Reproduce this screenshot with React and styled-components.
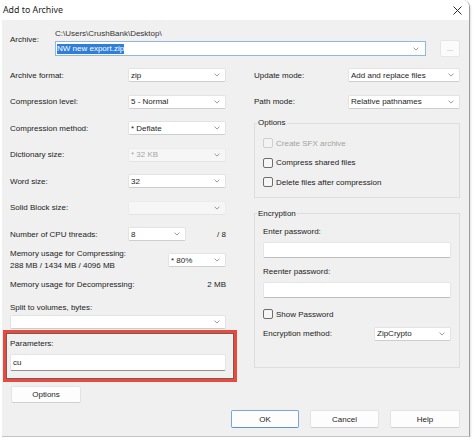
import React from "react";
import styled, { createGlobalStyle } from "styled-components";

const GlobalStyle = createGlobalStyle`
  html, body { margin: 0; padding: 0; background: #ffffff; }
  body {
    font-family: "Liberation Sans", Arial, sans-serif;
    font-size: 8px;
    color: #222222;
  }
  * { box-sizing: border-box; }
`;

const Chevron = () => (
  <svg width="6" height="4" viewBox="0 0 6 4">
    <path d="M0.5 0.6 L3 3.1 L5.5 0.6" fill="none" stroke="#8e8e8e" strokeWidth="0.9" />
  </svg>
);

const CloseIcon = () => (
  <svg width="9" height="9" viewBox="0 0 9 9">
    <path d="M0.5 0.5 L8.5 8.5 M8.5 0.5 L0.5 8.5" stroke="#2a2a2a" strokeWidth="1" fill="none" />
  </svg>
);

const Select = ({ value, width, disabled }) => (
  <SelectBox $w={width} $disabled={disabled}>
    <span>{value}</span>
    <Chevron />
  </SelectBox>
);

const Check = ({ label, disabled, mt }) => (
  <CheckRow $mt={mt} $disabled={disabled}>
    <CheckBox $disabled={disabled} />
    <span>{label}</span>
  </CheckRow>
);

const App = () => {
  return (
    <>
      <GlobalStyle />
      <Window>
        <TitleBar>
          <Title>Add to Archive</Title>
          <CloseIcon />
        </TitleBar>
        <Body>
          <ArchiveBlock>
            <ArchiveLabel>Archive:</ArchiveLabel>
            <div>
              <PathText>C:\Users\CrushBank\Desktop\</PathText>
              <ComboRow>
                <ArchiveCombo>
                  <Selected>NW new export.zip</Selected>
                  <Chevron />
                </ArchiveCombo>
                <BrowseButton>...</BrowseButton>
              </ComboRow>
            </div>
          </ArchiveBlock>

          <Columns>
            <Column>
              <Row>
                <Label>Archive format:</Label>
                <Select value="zip" width={98} />
              </Row>
              <Row $mt={12.5}>
                <Label>Compression level:</Label>
                <Select value="5 - Normal" width={98} />
              </Row>
              <Row $mt={12.5}>
                <Label>Compression method:</Label>
                <Select value="* Deflate" width={98} />
              </Row>
              <Row $mt={12.5}>
                <Label>Dictionary size:</Label>
                <Select value="* 32 KB" width={98} disabled />
              </Row>
              <Row $mt={12.5}>
                <Label>Word size:</Label>
                <Select value="32" width={98} />
              </Row>
              <Row $mt={12.5}>
                <Label>Solid Block size:</Label>
                <Select value="" width={98} disabled />
              </Row>
              <Row $mt={12.5}>
                <Label>Number of CPU threads:</Label>
                <Select value="8" width={58} />
                <Suffix>/ 8</Suffix>
              </Row>
              <Row $mt={7} $h={24}>
                <Label>
                  <Line>Memory usage for Compressing:</Line>
                  <Line>288 MB / 1434 MB / 4096 MB</Line>
                </Label>
                <Select value="* 80%" width={58} />
              </Row>
              <Row $mt={6} $h={12}>
                <Label>Memory usage for Decompressing:</Label>
                <span>2 MB</span>
              </Row>
              <Row $mt={11} $h={12}>
                <Label>Split to volumes, bytes:</Label>
              </Row>
              <Row $mt={2}>
                <Select value="" />
              </Row>
              <ParamsBox>
                <Line>Parameters:</Line>
                <ParamsInput>cu</ParamsInput>
              </ParamsBox>
              <Button $w={70}>Options</Button>
            </Column>

            <Column>
              <Row>
                <Label>Update mode:</Label>
                <Select value="Add and replace files" width={112} />
              </Row>
              <Row $mt={12.5}>
                <Label>Path mode:</Label>
                <Select value="Relative pathnames" width={112} />
              </Row>
              <Group $mt={8.5} $pb={8}>
                <Legend>Options</Legend>
                <Check label="Create SFX archive" disabled mt={7} />
                <Check label="Compress shared files" mt={5.7} />
                <Check label="Delete files after compression" mt={5.7} />
              </Group>
              <Group $mt={9.6} $pb={26}>
                <Legend>Encryption</Legend>
                <FieldCaption $mt={6}>Enter password:</FieldCaption>
                <PasswordInput />
                <FieldCaption $mt={8}>Reenter password:</FieldCaption>
                <PasswordInput />
                <Check label="Show Password" mt={9.5} />
                <Row $mt={5.5}>
                  <Label>Encryption method:</Label>
                  <Select value="ZipCrypto" width={77} />
                </Row>
              </Group>
            </Column>
          </Columns>

          <ButtonBar>
            <Button $w={68} $primary>OK</Button>
            <Button $w={69}>Cancel</Button>
            <Button $w={70}>Help</Button>
          </ButtonBar>
        </Body>
      </Window>
    </>
  );
};

export default App;

const Window = styled.div`
  width: 468px;
  height: 437px;
  margin-left: 2px;
  display: flex;
  flex-direction: column;
  border-right: 1px solid #9c9c9c;
  border-bottom: 1px solid #c4c4c4;
  border-top-right-radius: 7px;
  overflow: hidden;
  box-shadow: 1px 1px 2px rgba(0, 0, 0, 0.12);
`;

const TitleBar = styled.div`
  height: 20px;
  flex-shrink: 0;
  display: flex;
  align-items: center;
  justify-content: space-between;
  padding: 0 7px 0 1px;
  background: #ffffff;
`;

const Title = styled.span`
  font-family: "Noto Sans", "Open Sans", sans-serif;
  font-size: 8.8px;
  color: #1c1c1c;
`;

const Body = styled.div`
  flex: 1;
  background: #f0f0f0;
  padding: 8px 9px 0 8px;
`;

const ArchiveBlock = styled.div`
  display: grid;
  grid-template-columns: 45px 1fr;
`;

const ArchiveLabel = styled.div`
  padding-top: 5.5px;
  line-height: 11px;
`;

const PathText = styled.div`
  line-height: 11px;
  height: 12px;
  color: #333333;
`;

const ComboRow = styled.div`
  display: flex;
  align-items: center;
  height: 17px;
`;

const ArchiveCombo = styled.div`
  flex: 1;
  height: 15px;
  display: flex;
  align-items: center;
  justify-content: space-between;
  padding: 0 6px 0 1px;
  background: #ffffff;
  border: 1px solid #93b6de;
`;

const Selected = styled.span`
  background: #2f7ed8;
  color: #ffffff;
  line-height: 10px;
`;

const BrowseButton = styled.div`
  width: 20px;
  height: 17px;
  margin-left: 14px;
  display: flex;
  align-items: center;
  justify-content: center;
  background: #fbfbfb;
  border: 1px solid #e6e6e6;
  border-radius: 2px;
  color: #9a9a9a;
  font-size: 7px;
`;

const Columns = styled.div`
  display: grid;
  grid-template-columns: 216px 206px;
  column-gap: 28px;
  align-items: start;
  margin-top: 11px;
`;

const Column = styled.div`
  display: flex;
  flex-direction: column;
`;

const Row = styled.div`
  display: flex;
  align-items: center;
  height: ${(p) => p.$h || 14}px;
  margin-top: ${(p) => p.$mt || 0}px;
  flex-shrink: 0;
`;

const Label = styled.div`
  flex: 1;
  white-space: nowrap;
`;

const Line = styled.div`
  line-height: 12px;
  height: 12px;
`;

const Suffix = styled.span`
  width: 40px;
  text-align: right;
`;

const SelectBox = styled.div`
  width: ${(p) => (p.$w ? `${p.$w}px` : "100%")};
  height: 14px;
  flex-shrink: 0;
  display: flex;
  align-items: center;
  justify-content: space-between;
  padding: 0 5px 0 2px;
  background: ${(p) => (p.$disabled ? "#f6f6f6" : "#ffffff")};
  border: 1px solid ${(p) => (p.$disabled ? "#ebebeb" : "#e3e3e3")};
  border-bottom-color: ${(p) => (p.$disabled ? "#e4e4e4" : "#cdcdcd")};
  border-radius: 2px;
  color: ${(p) => (p.$disabled ? "#a6a6a6" : "#1e1e1e")};
  white-space: nowrap;
`;

const ParamsBox = styled.div`
  height: 52px;
  margin: 1px -11px 0 -7px;
  padding: 5px 8px 0 4px;
  border: 3px solid #ea4a3b;
  box-shadow: inset 0 0 0 1px rgba(70, 25, 20, 0.7);
  display: flex;
  flex-direction: column;
`;

const ParamsInput = styled.div`
  height: 17px;
  margin-top: 4px;
  padding-left: 2px;
  display: flex;
  align-items: center;
  background: #ffffff;
  border: 1px solid #e4e4e4;
  border-bottom-color: #8f8f8f;
  border-radius: 2px;
`;

const Button = styled.div`
  width: ${(p) => p.$w}px;
  height: ${(p) => (p.$primary ? 18 : 17)}px;
  margin-top: 4px;
  display: flex;
  align-items: center;
  justify-content: center;
  background: #fdfdfd;
  border: 1px solid ${(p) => (p.$primary ? "#7aa7d9" : "#e3e3e3")};
  border-bottom-color: ${(p) => (p.$primary ? "#5b92d0" : "#cfcfcf")};
  border-radius: 2px;
  color: #1e1e1e;
  margin-left: 1px;
`;

const ButtonBar = styled.div`
  display: flex;
  justify-content: flex-end;
  gap: 10px;
  margin-top: 3px;

  & > div {
    height: 18px;
  }
`;

const Group = styled.fieldset`
  margin: ${(p) => p.$mt || 0}px 0 0 0;
  padding: 0 8px ${(p) => p.$pb || 8}px 8px;
  border: 1px solid #dddddd;
  min-width: 0;
  display: flex;
  flex-direction: column;
`;

const Legend = styled.legend`
  padding: 0 1px;
  margin-left: -6px;
  line-height: 12px;
  height: 12px;
`;

const CheckRow = styled.div`
  display: flex;
  align-items: center;
  height: 14px;
  margin-top: ${(p) => p.$mt || 0}px;
  color: ${(p) => (p.$disabled ? "#a3a3a3" : "#222222")};
`;

const CheckBox = styled.span`
  width: 10px;
  height: 10px;
  margin-right: 3px;
  border: 1px solid ${(p) => (p.$disabled ? "#cfcfcf" : "#6e6e6e")};
  border-radius: 2px;
  background: ${(p) => (p.$disabled ? "#f3f3f3" : "#f6f6f6")};
`;

const FieldCaption = styled.div`
  line-height: 12px;
  height: 12px;
  margin-top: ${(p) => p.$mt || 0}px;
`;

const PasswordInput = styled.div`
  height: 16px;
  margin-top: 4px;
  background: #ffffff;
  border: 1px solid #e6e6e6;
  border-bottom-color: #bdbdbd;
  border-radius: 2px;
`;
